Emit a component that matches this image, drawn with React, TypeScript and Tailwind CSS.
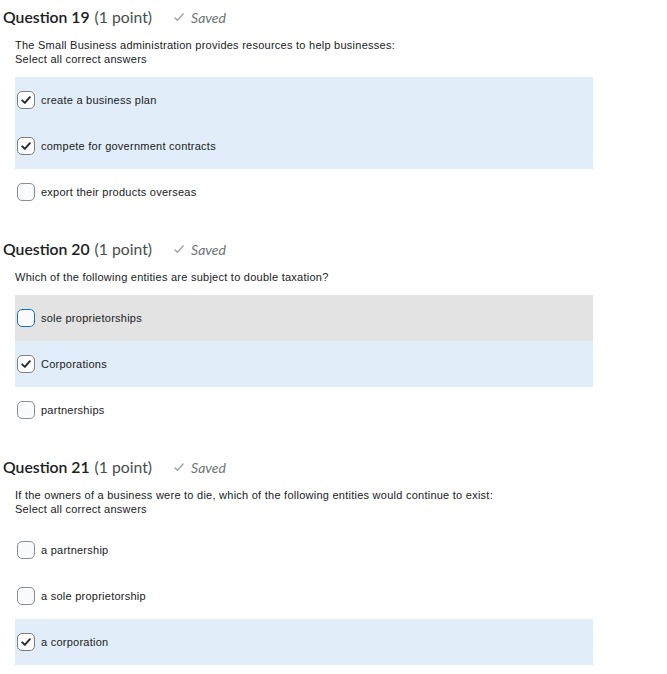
import React from "react";

type Option = { label: string; checked?: boolean; hover?: boolean };

type Question = {
  num: number;
  lines: string[];
  options: Option[];
};

const questions: Question[] = [
  {
    num: 19,
    lines: [
      "The Small Business administration provides resources to help businesses:",
      "Select all correct answers",
    ],
    options: [
      { label: "create a business plan", checked: true },
      { label: "compete for government contracts", checked: true },
      { label: "export their products overseas" },
    ],
  },
  {
    num: 20,
    lines: ["Which of the following entities are subject to double taxation?"],
    options: [
      { label: "sole proprietorships", hover: true },
      { label: "Corporations", checked: true },
      { label: "partnerships" },
    ],
  },
  {
    num: 21,
    lines: [
      "If the owners of a business were to die, which of the following entities would continue to exist:",
      "Select all correct answers",
    ],
    options: [
      { label: "a partnership" },
      { label: "a sole proprietorship" },
      { label: "a corporation", checked: true },
    ],
  },
];

const CheckBox = ({ checked, hover }: { checked?: boolean; hover?: boolean }) => (
  <span
    className={
      "flex h-[18px] w-[18px] shrink-0 items-center justify-center rounded-[5px] border " +
      (hover ? "border-[#1b72c2] bg-[#f9fbff]" : checked ? "border-[#7c8084] bg-white" : "border-[#8a8e92] bg-[#f9fbff]")
    }
  >
    {checked && (
      <svg width="12" height="12" viewBox="0 0 12 12">
        <path d="M2.2 6.4 L4.8 8.9 L9.9 3.2" fill="none" stroke="#2b2d2f" strokeWidth="2" strokeLinecap="round" strokeLinejoin="round" />
      </svg>
    )}
  </span>
);

const QuestionBlock = ({ q }: { q: Question }) => (
  <section>
    <div className="flex h-6 items-center pl-[3px] font-['Lato',sans-serif] text-[15.75px]">
      <span className="font-semibold text-[#202122]">Question {q.num}</span>
      <span className="ml-[5px] text-[#494c4e]">(1 point)</span>
      <span className="ml-[21px] flex items-center text-[14px] italic text-[#6e7376]">
        <svg width="12" height="12" viewBox="0 0 12 12" className="mr-[6px]">
          <path d="M1.5 6.5 L4.5 9.3 L10.5 2.5" fill="none" stroke="#9ea3a7" strokeWidth="1.3" />
        </svg>
        Saved
      </span>
    </div>
    <div className="ml-[15px] mt-[9px] font-['Liberation_Sans',Arial,sans-serif] text-[11px] leading-[14px] tracking-[0.25px] text-[#202122]">
      {q.lines.map((l) => (
        <div key={l}>{l}</div>
      ))}
    </div>
    <div className="ml-[15px] mt-[11px] w-[578px]">
      {q.options.map((o) => (
        <div
          key={o.label}
          className={
            "flex h-[46px] items-center pl-[2px] " +
            (o.hover ? "bg-[#e3e3e3]" : o.checked ? "bg-[#e1eef9]" : "")
          }
        >
          <CheckBox checked={o.checked} hover={o.hover} />
          <span className="ml-[6px] font-['Liberation_Sans',Arial,sans-serif] text-[11px] tracking-[0.25px] text-[#202122]">
            {o.label}
          </span>
        </div>
      ))}
    </div>
  </section>
);

export default function App() {
  return (
    <div className="min-h-[674px] w-[667px] bg-white pt-[5px]">
      <div className="flex flex-col gap-[22px]">
        {questions.map((q) => (
          <QuestionBlock key={q.num} q={q} />
        ))}
      </div>
    </div>
  );
}
